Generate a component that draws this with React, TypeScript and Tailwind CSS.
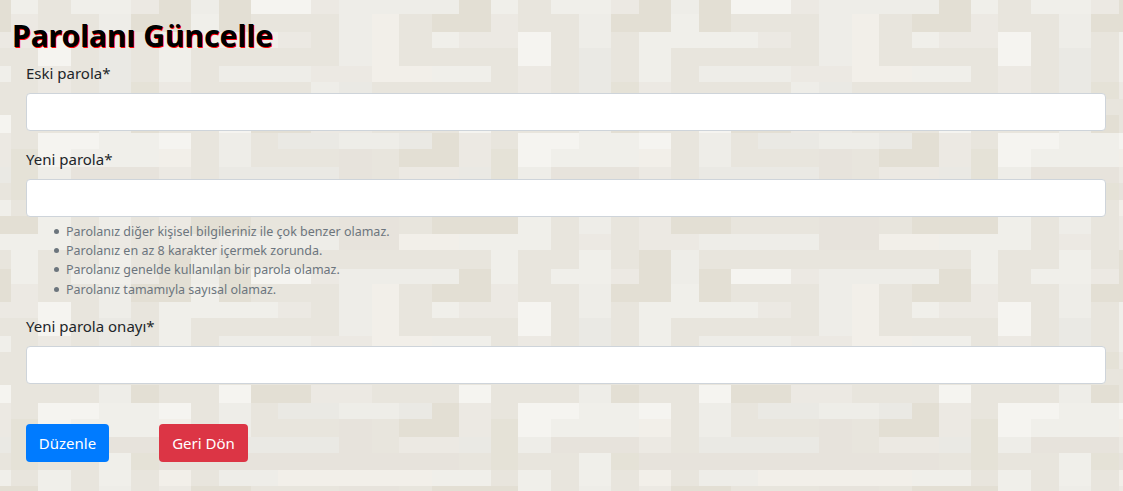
const rowH = [15, 18, 16, 18, 16, 17, 16, 18, 16, 18, 16, 17, 16, 18, 16, 19];
const colX = [11, 38, 71, 99, 131, 159, 191, 219, 251, 278, 311, 339, 372, 399, 432, 459, 491];

const P: Record<string, string> = {
  a: "#e3dfd4",
  h: "#e5e2d7",
  b: "#e8e5dd",
  p: "#e7e3dc",
  g: "#eae9e4",
  c: "#ece9e3",
  m: "#eeede8",
  d: "#f0efea",
  w: "#f2efe9",
  e: "#f5f4f0",
};

// first letter of each row is column 15 (which wraps round the tile edge), then columns 0..14
const rows = [
  "adbddcamaeecmmmm",
  "acbbmaadabbbmwba",
  "ccebmbddddcbmwbd",
  "bbebgbdbbbbbmwbb",
  "dbcbgbdbmmmccwwd",
  "bbcbghcbbbbmgbbb",
  "bbbbbbbbbbbbbbbb",
  "ebbbmabbeaaccbbb",
  "cbeeddebmbggmmga",
  "chedddwbmbbbpbaa",
  "ghmpppcbggggpbcc",
  "bhbbdhpppppppppp",
  "dbdbdbwbmmwwwwwd",
  "aadbmbcaabbbppba",
  "dddbcbccmmmmppww",
  "bdbbdbambbbbbbbb",
];

function Backdrop() {
  let y = 0;
  const rects: { x: number; y: number; w: number; h: number; f: string }[] = [];
  rows.forEach((row, r) => {
    const h = rowH[r];
    // column 15, left of the tile and right of it
    const last = P[row[0]];
    rects.push({ x: 0, y, w: 11, h, f: last });
    rects.push({ x: 459, y, w: 21, h, f: last });
    for (let c = 0; c < 15; c++) {
      rects.push({ x: colX[c], y, w: colX[c + 1] - colX[c], h, f: P[row[c + 1]] });
    }
    y += h;
  });
  return (
    <svg className="absolute inset-0 -z-10 h-full w-full blur-[0.5px]" aria-hidden="true">
      <defs>
        <pattern id="tile" x="0" y="-1" width="480" height="270" patternUnits="userSpaceOnUse">
          {rects.map((q, i) => (
            <rect key={i} x={q.x} y={q.y} width={q.w} height={q.h} fill={q.f} />
          ))}
        </pattern>
      </defs>
      <rect width="100%" height="100%" fill="url(#tile)" />
    </svg>
  );
}

function Field({ label, children }: { label: string; children?: React.ReactNode }) {
  return (
    <div className="mb-4">
      <label className="mb-2 block text-[15px] leading-6 text-[#212529]">{label}</label>
      <input
        type="password"
        className="block h-[38px] w-full rounded border border-[#ced4da] bg-white px-3 py-1.5"
      />
      {children}
    </div>
  );
}

const rules = [
  "Parolanız diğer kişisel bilgileriniz ile çok benzer olamaz.",
  "Parolanız en az 8 karakter içermek zorunda.",
  "Parolanız genelde kullanılan bir parola olamaz.",
  "Parolanız tamamıyla sayısal olamaz.",
];

export default function App() {
  return (
    <div className="relative isolate h-[491px] overflow-hidden bg-[#e8e5dd] font-['Noto_Sans',sans-serif]">
      <Backdrop />
      <h1 className="ml-3 pt-[17px] text-[30px] leading-[38px] font-bold text-black [text-shadow:1px_1px_0_#f00]">
        Parolanı Güncelle
      </h1>
      <form className="ml-[26px] mr-[17px] mt-[6px]">
        <Field label="Eski parola*" />
        <Field label="Yeni parola*">
          <ul className="mt-[5px] -mb-px pl-10 text-[12.5px] leading-[19.2px] text-[#6c757d]">
            {rules.map((r) => (
              <li
                key={r}
                className="relative before:absolute before:left-[-12px] before:top-[7px] before:size-[5px] before:rounded-full before:bg-[#6c757d]"
              >
                {r}
              </li>
            ))}
          </ul>
        </Field>
        <Field label="Yeni parola onayı*" />
        <div className="mt-10 flex gap-[50px]">
          <button type="button" className="h-[38px] w-[83px] rounded bg-[#007bff] text-[15px] text-white">
            Düzenle
          </button>
          <button type="button" className="h-[38px] w-[89px] rounded bg-[#dc3545] text-[15px] text-white">
            Geri Dön
          </button>
        </div>
      </form>
    </div>
  );
}
